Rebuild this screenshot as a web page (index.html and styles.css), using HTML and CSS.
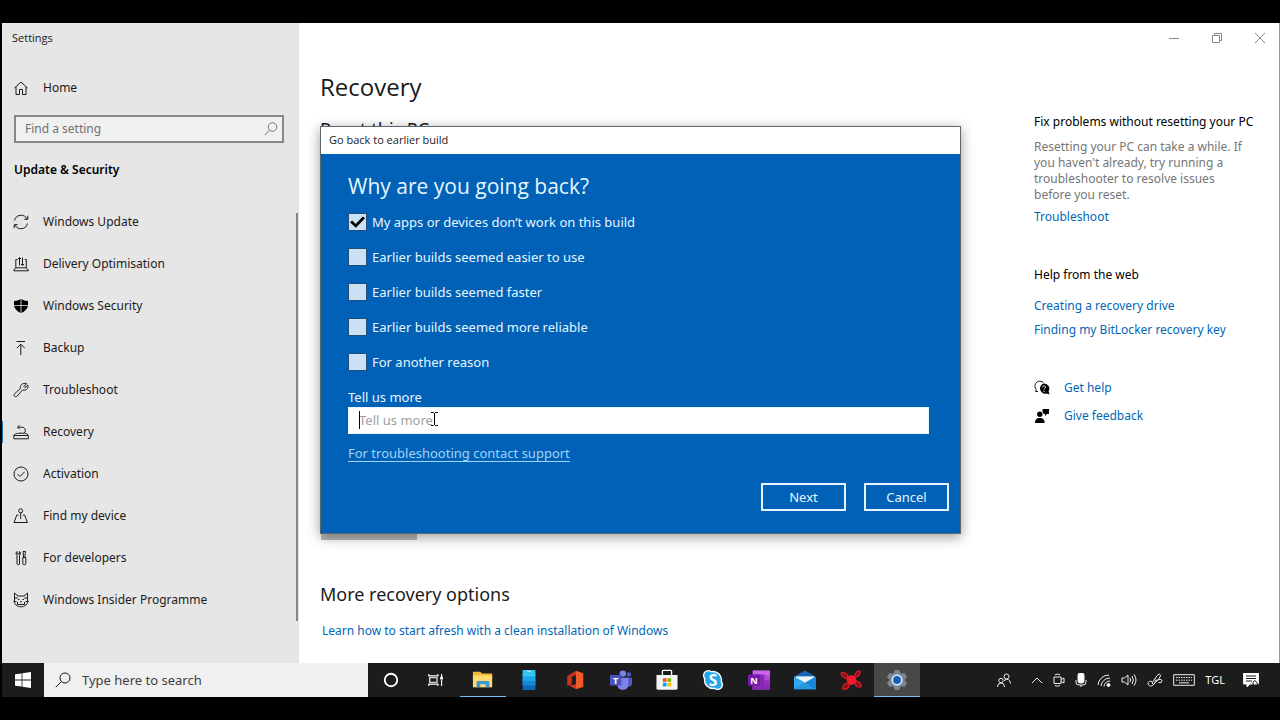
FILE: index.html
```html
<!DOCTYPE html>
<html lang="en">
<head>
  <meta charset="UTF-8" />
  <meta name="viewport" content="width=device-width, initial-scale=1.0" />
  <title>Settings</title>
  <link rel="stylesheet" href="styles.css">
</head>
<body>
<div class="screen">
  <div class="window">

    <!-- Sidebar -->
    <aside class="sidebar">
      <div class="app-title">Settings</div>
      <a class="nav-item home" href="#">
        <svg class="icon" viewBox="0 0 16 16"><path d="M1.500 8 8 2l6.500 6M3 7v7.500h3.500V9.500h3v5H13V7"/></svg>
        Home
      </a>
      <div class="search">
        <input type="text" class="search-input" placeholder="Find a setting" aria-label="Find a setting">
        <svg class="icon search-icon" viewBox="0 0 16 16"><circle cx="9.500" cy="6" r="4.300"/><path d="M6.400 9.200 2 14"/></svg>
      </div>
      <h2 class="group-title">Update &amp; Security</h2>
      <nav class="nav">
        <a class="nav-item" href="#">
          <svg class="icon" viewBox="0 0 16 16"><path d="M1.600 6.500A6.600 6.600 0 0 1 14 5M14.400 9.500A6.600 6.600 0 0 1 2 11M14.800 1.800V5.300H11.300M1.200 14.200v-3.500h3.500"/></svg>
          Windows Update
        </a>
        <a class="nav-item" href="#">
          <svg class="icon" viewBox="0 0 16 16"><path d="M4.500 3.500H2.800v8.300h10.500V3.500h-1.600M2.800 11.800.8 14v.8h14.500V14l-2-2.200M6.500 9.500V1.500L5 3M9.500 1.500v8L11 8M6.500 1.500 8 3M9.500 9.500 8 8"/></svg>
          Delivery Optimisation
        </a>
        <a class="nav-item" href="#">
          <svg class="icon" viewBox="0 0 16 16"><path class="solid" d="M7.600 1C6 2.300 3.500 2.900 1 2.900V7.300h6.600zM8.400 1C10 2.300 12.500 2.900 15 2.900V7.300H8.400zM1.100 8.100h6.500V15C4.300 13.600 1.700 11.200 1.100 8.100zM14.900 8.100H8.400V15c3.300-1.400 5.900-3.800 6.500-6.900z"/></svg>
          Windows Security
        </a>
        <a class="nav-item" href="#">
          <svg class="icon" viewBox="0 0 16 16"><path d="M3.500 1.500h8.500M7.800 15V4.200M3.800 8.200l4-4 4 4"/></svg>
          Backup
        </a>
        <a class="nav-item" href="#">
          <svg class="icon" viewBox="0 0 16 16"><path d="M13.600 1.600 10.800 4.400l1.200 1.300L14.800 3C15.600 5.600 13.800 8.200 11 8.200c-.6 0-1-.1-1.400-.3L4 14.200c-.7.8-1.800.7-2.500 0s-.7-1.800.1-2.500L7.500 6.500C6.500 3.500 9.500.4 13.600 1.600z"/></svg>
          Troubleshoot
        </a>
        <a class="nav-item active" href="#">
          <svg class="icon" viewBox="0 0 16 16"><path d="M4.500 9.500H2.700L.8 11.500v3.300h14.500v-3.300L13.500 9.500h-2M.8 11.500h14.500M5 9.200h6C13.600 6.500 12 3.200 9 3.200H4.800M6.500 1.200l-2 2 2 2"/></svg>
          Recovery
        </a>
        <a class="nav-item" href="#">
          <svg class="icon" viewBox="0 0 16 16"><circle cx="8" cy="8" r="7"/><path d="m4.500 8 2.500 2.500 4.600-4.700"/></svg>
          Activation
        </a>
        <a class="nav-item" href="#">
          <svg class="icon" viewBox="0 0 16 16"><circle cx="7.700" cy="2.800" r="2"/><path d="M7.700 4.800V11M5.500 7H3.800L1 14.500h13.400L11.600 7H9.900"/></svg>
          Find my device
        </a>
        <a class="nav-item" href="#">
          <svg class="icon" viewBox="0 0 16 16"><path d="M4 1.500C2.800 2.500 2.800 4.800 4 5.600V14c0 1 2.500 1 2.500 0V5.600C7.800 4.800 7.800 2.500 6.500 1.500V4H4zM10 1.500h2.500L12 5v2.500h-1.500V5zM9.800 7.500h3V14c0 1-3 1-3 0z"/></svg>
          For developers
        </a>
        <a class="nav-item" href="#">
          <svg class="icon" viewBox="0 0 16 16"><path d="M1.500 1v7c-1.200 4 3 6.800 6.500 6.800s7.700-2.800 6.500-6.800V1L11 4H5zM1.500 6h3.300M11.200 6h3.300M.5 9.500h3M12.500 9.500h3M4.500 10v2.500h7V10M5 7.500h1.500M9.500 7.500H11M7 9.800h2"/></svg>
          Windows Insider Programme
        </a>
      </nav>
    </aside>

    <!-- Page content -->
    <div class="page">
      <div class="window-buttons">
        <button class="window-button" aria-label="Minimise"><svg viewBox="0 0 10 10"><path d="M0 5.500h10"/></svg></button>
        <button class="window-button" aria-label="Restore"><svg viewBox="0 0 10 10"><path d="M.5 2.500h7v7h-7zM2.500 2.500v-2h7v7h-2"/></svg></button>
        <button class="window-button" aria-label="Close"><svg viewBox="0 0 10 10"><path d="m0 0 10 10M10 0 0 10"/></svg></button>
      </div>
      <div class="columns">
        <main class="content">
          <h1>Recovery</h1>
          <h2>Reset this PC</h2>
          <button class="reset-button" aria-label="Get started"></button>
          <h2>More recovery options</h2>
          <a class="link" href="#">Learn how to start afresh with a clean installation of Windows</a>
        </main>
        <aside class="help">
          <section>
            <h3>Fix problems without resetting your PC</h3>
            <p>Resetting your PC can take a while. If you haven't already, try running a troubleshooter to resolve issues before you reset.</p>
            <a class="link" href="#">Troubleshoot</a>
          </section>
          <section class="help-web">
            <h3>Help from the web</h3>
            <a class="link" href="#">Creating a recovery drive</a>
            <a class="link" href="#">Finding my BitLocker recovery key</a>
          </section>
          <section class="help-contact">
            <a class="link" href="#">
              <svg class="icon" viewBox="0 0 16 16"><path d="M4 11.500H1.500L2.300 9.600C-.8 5.500 2 1.200 5.500 1.200c2 0 3.500.8 4.300 2"/><path class="solid" d="M10 3.500a5.200 5.200 0 0 1 4.600 7.800l.9 3.200-3-.9A5.200 5.200 0 1 1 10 3.500z"/><path class="light" d="M8.500 7.300c.2-2 3.200-1.700 3 0-.1 1-1.500 1-1.500 2.200M10 10.700v1.200"/></svg>
              Get help
            </a>
            <a class="link" href="#">
              <svg class="icon" viewBox="0 0 16 16"><path class="solid" d="M8.500 1h6.500v5h-2L11 8V6H9.500A4 4 0 0 0 8.500 3.500z"/><circle class="solid" cx="5.800" cy="6.300" r="2.700"/><path class="solid" d="M1 15c0-3.500 1.500-5 4.800-5s4.800 1.500 4.800 5z"/></svg>
              Give feedback
            </a>
          </section>
        </aside>
      </div>
    </div>

    <!-- Dialog -->
    <form class="dialog" role="dialog" aria-labelledby="dialog-title">
      <div class="dialog-bar" id="dialog-title">Go back to earlier build</div>
      <div class="dialog-body">
        <h2>Why are you going back?</h2>
        <div class="reasons">
          <label><input type="checkbox" checked>My apps or devices don’t work on this build</label>
          <label><input type="checkbox">Earlier builds seemed easier to use</label>
          <label><input type="checkbox">Earlier builds seemed faster</label>
          <label><input type="checkbox">Earlier builds seemed more reliable</label>
          <label><input type="checkbox">For another reason</label>
        </div>
        <label class="more-label" for="more">Tell us more</label>
        <div class="more">
          <input type="text" id="more" placeholder="Tell us more">
          <span class="caret"></span>
          <svg class="ibeam" viewBox="0 0 7 14"><path d="M0 .5h2.500l1 1 1-1H7M0 13.500h2.500l1-1 1 1H7M3.500 1v12"/></svg>
        </div>
        <a class="support" href="#">For troubleshooting contact support</a>
        <div class="actions">
          <button type="button">Next</button>
          <button type="button">Cancel</button>
        </div>
      </div>
    </form>
  </div>

  <!-- Taskbar -->
  <footer class="taskbar">
    <button class="start" aria-label="Start">
      <svg viewBox="0 0 16 16"><path fill="#fff" d="M0 2.300 6.600 1.400V7.600H0zM7.400 1.300 16 0v7.600H7.400zM0 8.400h6.600v6.200L0 13.700zM7.400 8.400H16V16l-8.600-1.300z"/></svg>
    </button>
    <div class="task-search">
      <svg class="icon" viewBox="0 0 16 16"><circle cx="10" cy="6" r="5"/><path d="M6.300 9.700.8 15.200"/></svg>
      <input type="text" placeholder="Type here to search" aria-label="Type here to search">
    </div>
    <div class="apps">
      <button class="app" aria-label="Cortana"><svg viewBox="0 0 24 24"><circle cx="12" cy="12" r="6.800" fill="none" stroke="#fff" stroke-width="2"/></svg></button>
      <button class="app" aria-label="Task view"><svg viewBox="0 0 24 24"><path fill="none" stroke="#fff" stroke-width="1.200" d="M3 5.500v2h10v-2M3 18.500v-2h10v2M4 9.500h8v5H4zM17 5.500V9M17 12v6.500"/><path fill="#fff" d="M15.500 8.500h3v3h-3z"/></svg></button>
      <button class="app running" aria-label="File Explorer"><svg viewBox="0 0 24 24"><path fill="#f0b93a" d="M1 3h8l2 2h11v6H1z"/><path fill="#ffd96b" d="M1 7h21v13H1z"/><path fill="#3b96d8" d="M5 20v-5.500q0-1.500 1.500-1.500h11q1.500 0 1.500 1.500V20h-4v-3.500H9V20z"/></svg></button>
      <button class="app" aria-label="Your Phone"><svg viewBox="0 0 24 24"><path fill="#0b68b5" d="M5 12h14v10q0 1-1 1H6q-1 0-1-1z"/><path fill="#1489d8" d="M5 11h14v7H5z"/><path fill="#1ba7ea" d="M5 6h14v7H5z"/><path fill="#35c5f5" d="M5 2q0-1 1-1h12q1 0 1 1v6H5z"/><path fill="#d8f5ff" d="M10 2h4v1h-4z"/></svg></button>
      <button class="app" aria-label="Office"><svg viewBox="0 0 24 24"><path fill="#c9331d" d="M3.500 7.500 13 2v4.500L8.500 8.500v8l-5 2z"/><path fill="#f0592b" d="m13 2 8 2.500v15L13 22z"/><path fill="#d83b1c" d="m6 18 7-1.500V22z"/></svg></button>
      <button class="app" aria-label="Teams"><svg viewBox="0 0 24 24"><circle cx="14" cy="5" r="3.500" fill="#7b83eb"/><circle cx="20.500" cy="6" r="2.400" fill="#5059c9"/><path fill="#5059c9" d="M16 9.500h8v6.500q0 3-3.500 3H17z"/><path fill="#7b83eb" d="M8 9.500h12v8a6 5.500 0 0 1-12 0z"/><path fill="#4b53bc" d="M0 6.500h12.500V18H0z"/><text x="6.200" y="16" fill="#fff" font-size="10" font-weight="700" text-anchor="middle">T</text></svg></button>
      <button class="app" aria-label="Microsoft Store"><svg viewBox="0 0 24 24"><path fill="none" stroke="#fff" stroke-width="1.400" d="M7 7V2.500q0-1 1-1h8q1 0 1 1V7"/><path fill="#f5f5f5" d="M.5 6.500h23V21q0 1.500-1.500 1.500H2Q.5 22.500.5 21z"/><path fill="#f25022" d="M7.500 10h4v4h-4z"/><path fill="#7fba00" d="M12.500 10h4v4h-4z"/><path fill="#00a4ef" d="M7.500 15h4v4h-4z"/><path fill="#ffb900" d="M12.500 15h4v4h-4z"/></svg></button>
      <button class="app" aria-label="Skype"><svg viewBox="0 0 24 24"><circle cx="12" cy="12" r="10" fill="#fff"/><circle cx="7" cy="7" r="6" fill="#fff"/><circle cx="17" cy="17" r="6" fill="#fff"/><circle cx="12" cy="12" r="8.500" fill="#22a6e8"/><circle cx="7" cy="7" r="4.500" fill="#22a6e8"/><circle cx="17" cy="17" r="4.500" fill="#22a6e8"/><text x="12" y="18" fill="#fff" font-size="17" font-weight="700" text-anchor="middle">S</text></svg></button>
      <button class="app" aria-label="OneNote"><svg viewBox="0 0 24 24"><path fill="#ca64ea" d="M5 1.500h19v21H5z"/><path fill="#ae4bd5" d="M18 7h6v5h-6z"/><path fill="#9332bf" d="M18 12h6v5h-6z"/><path fill="#7719aa" d="M18 17h6v5.500h-6zM5 6h13v16.500H5z" opacity=".8"/><path fill="#7719aa" d="M0 6h13v12.500H0z"/><text x="6.500" y="16" fill="#fff" font-size="10" font-weight="700" text-anchor="middle">N</text></svg></button>
      <button class="app" aria-label="Mail"><svg viewBox="0 0 24 24"><path fill="#1066b5" d="M0 8.500 12 1.500l12 7z"/><path fill="#e8f4fc" d="M2 8h20v8H2z"/><path fill="#1a86da" d="M24 8v14H0z"/><path fill="#32a8f0" d="M0 8l12 7-12 7z"/><path fill="#2796e3" d="m12 15 12 7H0z"/></svg></button>
      <button class="app" aria-label="Red star app"><svg viewBox="0 0 24 24"><g fill="#8e0f16" stroke="#ed1c2c" stroke-width="1.200"><path d="M9 8.500C8 5.500 5 3 1.500 4c-1 2.500 1 5 5.500 6.500zM15.500 9.500c3-.5 6.500-2.500 6.500-7-3-1-5 1-6 5zM16 15.500c1 3 4 5.500 7 4 .8-2.500-1-5-5-6.500zM9 15c-3 .5-6 2.500-6 6.500 3 1.500 6 0 7.500-4z"/></g><circle cx="12.500" cy="12" r="5.300" fill="#ed1c2c"/></svg></button>
      <button class="app running current" aria-label="Settings"><svg viewBox="0 0 24 24"><path fill="#7b8793" d="M9.500 1h5l.8 3 2 1.200 3-.9L23 8.900l-2.400 2.300v1.600L23 15.100l-2.700 4.600-3-.9-2 1.200-.8 3h-5l-.8-3-2-1.200-3 .9L1 15.100l2.400-2.300v-1.600L1 8.900l2.700-4.600 3 .9 2-1.200z"/><circle cx="12" cy="12" r="6" fill="#e8eef4"/><circle cx="12" cy="12" r="4.300" fill="#1560b8"/></svg></button>
    </div>
    <div class="tray">
      <svg class="tray-icon people" viewBox="0 0 14 14"><circle cx="9.500" cy="3.500" r="2.500"/><circle cx="4" cy="7.500" r="2.200"/><path d="M.5 14q0-4 3.500-4t3.500 4M7 7.500q5.500-3.500 6.500 3"/></svg>
      <svg class="tray-icon narrow" viewBox="0 0 12 14"><path d="m1 10 5-5 5 5"/></svg>
      <svg class="tray-icon narrow" viewBox="0 0 12 14"><path d="M1 4h7v6.500H1zM8 6.500l3-1.500v5L8 8.500M2 1.800q2.500-1.500 5 0M2 12.500q2.500 1.500 5 0"/></svg>
      <svg class="tray-icon narrow" viewBox="0 0 12 14"><rect class="white" x="3" y="0" width="6" height="10" rx="2"/><path d="M1 7v2q0 3 3 3h4q3 0 3-3V7M6 12v2"/></svg>
      <svg class="tray-icon" viewBox="0 0 14 14"><path d="M1 12A11 11 0 0 1 12 2M4 13a9 9 0 0 1 9-8M7 13.500A6 6 0 0 1 13 8"/><circle class="white" cx="11.500" cy="12" r="1.500"/></svg>
      <svg class="tray-icon wide" viewBox="0 0 16 14"><path d="M1 5v4h2.500L7 12V2L3.500 5zM9 4.800q1.500 2.200 0 4.400M11 3q2.800 4 0 8M13 1.300q4 5.700 0 11.400"/></svg>
      <svg class="tray-icon wide" viewBox="0 0 16 14"><path d="M5 8.500C0 7 0 13 3.500 13 7.500 13 8 8 9 6.500M5 10l5.500-8q2-2 3 0c.7 1.500-5 8-7 9.500zM9 8q5-3 6-.5 0 3-3.500 2"/></svg>
      <svg class="tray-icon keyboard" viewBox="0 0 22 14"><path d="M.7 1.700h20.600v10.600H.7zM6 9.800h10"/><path stroke-dasharray="1.500 1" d="M3 4.500h16M3 7.200h16"/></svg>
      <span class="lang">TGL</span>
      <svg class="tray-icon wide notice" viewBox="0 0 16 14"><path class="white" d="M.5 0h15v11H7L4 14v-3H.5z"/><path class="dark" d="M3 3h10M3 5.500h10M3 8h6"/><path class="dark" d="M10 9q2-3 3.500 0l1.500 3q-3 2-5 0z"/></svg>
    </div>
  </footer>
</div>
</body>
</html>
```

FILE: styles.css
```css
* {
  box-sizing: border-box;
}

body {
  margin: 0;
  background: #000;
  color: #1b1b1b;
  font-family: "Noto Sans", "Open Sans", sans-serif;
  font-size: 12px;
  line-height: 20px;
}

h1, h2, h3, p {
  margin: 0;
  font-weight: 400;
}

button, input {
  font: inherit;
}

a {
  color: inherit;
  text-decoration: none;
}

.screen {
  display: flex;
  flex-direction: column;
  min-height: 100vh;
  padding: 23px 0 23px 2px;
}

.window {
  position: relative;
  display: flex;
  flex: 1;
  background: #fff;
  border-right: 1px solid #999;
}

.icon {
  width: 16px;
  height: 16px;
  flex: none;
  fill: none;
  stroke: #1b1b1b;
  stroke-width: 1;
}

.icon .solid {
  fill: #000;
  stroke: none;
}

.icon .light {
  stroke: #fff;
}

/* Sidebar */
.sidebar {
  width: 297px;
  flex: none;
  background: #e6e6e6;
}

.app-title {
  padding: 5px 10px;
  font-family: "Open Sans", "Noto Sans", sans-serif;
  font-size: 11px;
}

.nav-item {
  position: relative;
  display: flex;
  align-items: center;
  gap: 14px;
  height: 42px;
  padding-left: 11px;
}

.home {
  margin-top: 14px;
}

.search {
  display: flex;
  align-items: center;
  height: 28px;
  margin: 6px 15px 0 12px;
  padding-right: 3px;
  border: 2px solid #888;
  background: #f0f0f0;
}

.search-input {
  flex: 1;
  min-width: 0;
  padding: 0 9px;
  border: 0;
  background: none;
}

.search-input::placeholder {
  color: #707070;
  opacity: 1;
}

.search-icon {
  stroke: #777;
}

.group-title {
  margin: 17px 12px 21px;
  font-size: 12px;
  font-weight: 600;
  color: #000;
}

.nav {
  margin-right: 1px;
  background: linear-gradient(#858585, #858585) right bottom / 2px calc(100% - 12px) no-repeat;
}

.active::before {
  content: "";
  position: absolute;
  left: 0;
  width: 1px;
  height: 22px;
  background: #1a6fb0;
}

/* Page content */
.page {
  display: flex;
  flex: 1;
  flex-direction: column;
}

.window-buttons {
  display: flex;
  justify-content: flex-end;
  gap: 5px;
}

.window-button {
  display: flex;
  align-items: center;
  justify-content: center;
  width: 38px;
  height: 30px;
  padding: 0;
  border: 0;
  background: none;
}

.window-button svg {
  width: 10px;
  height: 10px;
  overflow: visible;
  fill: none;
  stroke: #888;
}

.columns {
  display: flex;
  flex: 1;
}

.content {
  flex: 1;
  padding: 18px 21px;
}

h1 {
  font-family: "Open Sans", "Noto Sans", sans-serif;
  font-size: 24px;
  line-height: 32px;
}

.content h2 {
  margin-top: 14px;
  font-size: 18px;
  line-height: 24px;
}

.reset-button {
  display: block;
  width: 96px;
  height: 28px;
  margin: 371px 0 42px 1px;
  border: 0;
  background: #bbb;
}

.content .link {
  display: block;
  margin: 15px 0 0 2px;
}

.link {
  color: #0067b8;
}

/* Help column */
.help {
  width: 245px;
  flex: none;
  padding: 59px 14px 0 0;
}

.help h3 {
  font-size: 12px;
  color: #000;
  white-space: nowrap;
}

.help p {
  margin: 7px 20px 4px 0;
  line-height: 16px;
  color: #767676;
}

.help-web {
  display: flex;
  flex-direction: column;
  gap: 4px;
  margin-top: 38px;
}

.help-web h3 {
  margin-bottom: 7px;
}

.help-contact {
  display: flex;
  flex-direction: column;
  gap: 8px;
  margin-top: 38px;
}

.help-contact .link {
  display: flex;
  align-items: center;
  gap: 14px;
}

/* Dialog */
.dialog {
  position: absolute;
  top: 103px;
  left: 318px;
  right: 318px;
  border: 1px solid #5c6670;
  box-shadow: 0 3px 12px rgba(0, 0, 0, 0.4);
  background: #0061b7;
  color: #e6f5ff;
  font-size: 13px;
}

.dialog-bar {
  height: 27px;
  padding: 3px 8px;
  background: #fff;
  color: #1b1b1b;
  font-family: "Open Sans", "Noto Sans", sans-serif;
  font-size: 11px;
}

.dialog-body {
  padding: 18px 11px 22px 27px;
}

.dialog-body h2 {
  font-family: "Open Sans", "Noto Sans", sans-serif;
  font-size: 21px;
  line-height: 28px;
}

.reasons {
  display: grid;
  gap: 15px;
  margin-top: 12px;
}

.reasons label {
  display: flex;
  align-items: center;
  gap: 5px;
}

.reasons input {
  display: flex;
  align-items: center;
  justify-content: center;
  width: 19px;
  height: 18px;
  margin: 0;
  appearance: none;
  border: 1px solid #1f4f80;
  background: #cce0f3;
}

.reasons input:checked::after {
  content: "";
  width: 15px;
  height: 12px;
  background: #000;
  clip-path: polygon(0 52%, 14% 38%, 38% 66%, 86% 4%, 100% 18%, 39% 97%);
}

.more-label {
  display: block;
  margin-top: 15px;
}

.more {
  position: relative;
  margin-right: 20px;
}

.more input {
  display: block;
  width: 100%;
  height: 27px;
  padding: 0 10px 2px;
  border: 1px solid #e6f5ff;
  background: #fff;
}

.more input::placeholder {
  color: #a0a0a0;
  opacity: 1;
}

.caret {
  position: absolute;
  top: 4px;
  left: 11px;
  width: 1px;
  height: 18px;
  background: #000;
}

.ibeam {
  position: absolute;
  top: 5px;
  left: 83px;
  width: 7px;
  height: 14px;
  fill: none;
  stroke: #000;
}

.support {
  display: inline-block;
  margin-top: 9px;
  color: #9fd4fb;
  text-decoration: underline;
  text-underline-offset: 3px;
}

.actions {
  display: flex;
  justify-content: flex-end;
  gap: 18px;
  margin-top: 20px;
}

.actions button {
  width: 85px;
  height: 28px;
  padding: 0;
  border: 2px solid #e6f5ff;
  background: none;
  color: inherit;
}

/* Taskbar */
.taskbar {
  display: flex;
  height: 34px;
  background: #1c1c1c;
  color: #fff;
}

.taskbar button {
  display: flex;
  align-items: center;
  justify-content: center;
  padding: 0;
  border: 0;
  background: none;
}

.start {
  width: 42px;
}

.start svg {
  width: 16px;
  height: 16px;
}

.task-search {
  display: flex;
  align-items: center;
  gap: 11px;
  width: 324px;
  padding-left: 11px;
  background: #f0f0f0;
}

.task-search input {
  flex: 1;
  min-width: 0;
  padding: 0;
  border: 0;
  background: none;
  font-size: 13px;
}

.task-search input::placeholder {
  color: #404040;
  opacity: 1;
}

.apps {
  display: flex;
}

.app {
  width: 46px;
}

.app svg {
  width: 22px;
  height: 22px;
}

.taskbar .running {
  border-bottom: 1px solid #76b9ed;
}

.taskbar .current {
  background: #484848;
}

.tray {
  display: flex;
  flex: 1;
  align-items: center;
  justify-content: flex-end;
  gap: 10px;
  padding-right: 21px;
}

.tray-icon {
  width: 14px;
  height: 14px;
  fill: none;
  stroke: #eee;
}

.tray-icon.narrow {
  width: 12px;
}

.tray-icon.wide {
  width: 16px;
}

.tray-icon.keyboard {
  width: 22px;
}

.tray-icon .white {
  fill: #fff;
}

.tray-icon .dark {
  stroke: #1c1c1c;
}

.people {
  margin-right: 10px;
}

.notice {
  margin-left: 8px;
}

.lang {
  font-size: 11px;
}
```
